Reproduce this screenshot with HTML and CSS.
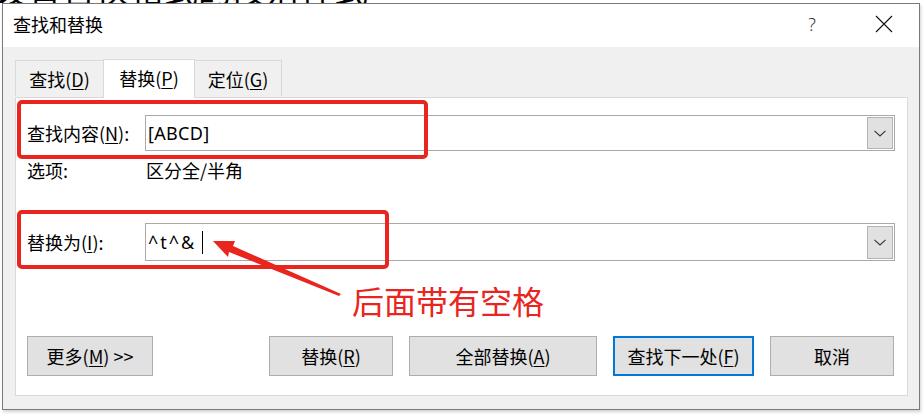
FILE: index.html
```html
<!DOCTYPE html>
<html lang="zh">
<head>
<meta charset="utf-8">
<title>查找和替换</title>
<link rel="stylesheet" href="styles.css">
</head>
<body>
<div class="top-strip"><span>设置替换格式的段落样式</span></div>
<div class="dialog">
  <div class="titlebar">
    <span class="title">查找和替换</span>
    <span class="help">?</span>
    <span class="close">
      <svg width="18" height="18" viewBox="0 0 18 18"><path d="M1 1 L17 17 M17 1 L1 17" stroke="#111" stroke-width="1.1" fill="none"/></svg>
    </span>
  </div>
  <div class="body">
    <div class="tabs">
      <div class="tab t1">查找(<u>D</u>)</div>
      <div class="tab t2 active">替换(<u>P</u>)</div>
      <div class="tab t3">定位(<u>G</u>)</div>
    </div>
    <div class="panel">
      <div class="row row-find">
        <span class="label">查找内容(<u>N</u>):</span>
        <div class="combo">
          <span class="value">[ABCD]</span>
          <span class="drop"><svg width="12" height="7" viewBox="0 0 12 7"><path d="M0.5 0.8 L6 6 L11.5 0.8" stroke="#333" stroke-width="1.1" fill="none"/></svg></span>
        </div>
      </div>
      <div class="row row-opt">
        <span class="label">选项:</span>
        <span class="opt">区分全/半角</span>
      </div>
      <div class="row row-repl">
        <span class="label">替换为(<u>I</u>):</span>
        <div class="combo combo2">
          <span class="value">^t^&amp;&nbsp;</span><span class="caret"></span>
          <span class="drop"><svg width="12" height="7" viewBox="0 0 12 7"><path d="M0.5 0.8 L6 6 L11.5 0.8" stroke="#333" stroke-width="1.1" fill="none"/></svg></span>
        </div>
      </div>
      <div class="buttons">
        <button class="btn b-more">更多(<u>M</u>) &gt;&gt;</button>
        <button class="btn b-repl">替换(<u>R</u>)</button>
        <button class="btn b-all">全部替换(<u>A</u>)</button>
        <button class="btn b-next">查找下一处(<u>F</u>)</button>
        <button class="btn b-cancel">取消</button>
      </div>
    </div>
  </div>
</div>

<div class="mark mark1"></div>
<div class="mark mark2"></div>
<svg class="arrow" width="924" height="415" viewBox="0 0 924 415">
  <polygon points="213,241 235,241 233,246 341,294 339,296 229,252 228,257" fill="#e8251f"/>
</svg>
<div class="note">后面带有空格</div>
</body>
</html>
```

FILE: styles.css
```css
html, body {
  margin: 0;
  padding: 0;
}
body {
  width: 924px;
  height: 415px;
  overflow: hidden;
  position: relative;
  background: #ffffff;
  font-family: "Noto Sans CJK SC", sans-serif;
  color: #000;
}
u { text-decoration: underline; text-underline-offset: 2px; text-decoration-thickness: 1px; }

.top-strip {
  height: 3px;
  overflow: hidden;
  white-space: nowrap;
  font-family: "Noto Sans CJK SC", sans-serif;
  font-size: 34px;
  line-height: 34px;
}
.top-strip span {
  display: block;
  margin-top: -28px;
  margin-left: -6px;
}

.dialog {
  margin-left: 2px;
  width: 916px;
  height: 405px;
  border: 1px solid #7a7a7a;
  box-shadow: 1px 2px 3px rgba(0,0,0,0.18);
  display: flex;
  flex-direction: column;
  background: #f0f0f0;
}

.titlebar {
  height: 43px;
  background: #fff;
  display: flex;
  align-items: center;
  padding-left: 10px;
  flex-shrink: 0;
}
.title {
  font-size: 18px;
  flex: 1;
  margin-top: -3px;
}
.help {
  font-family: "Noto Sans", sans-serif;
  font-size: 18px;
  font-weight: 300;
  color: #333;
  width: 20px;
  text-align: center;
  margin-right: 53px;
  margin-top: -3px;
}
.close {
  width: 18px;
  height: 18px;
  margin-right: 26px;
  margin-top: -4px;
}
.close svg { display: block; }

.body {
  flex: 1;
  padding: 12px 11px 13px 12px;
  display: flex;
  flex-direction: column;
}

.tabs {
  display: flex;
  align-items: flex-end;
  height: 38px;
  position: relative;
  z-index: 1;
}
.tab {
  height: 36px;
  box-sizing: border-box;
  border: 1px solid #d9d9d9;
  border-bottom: none;
  background: #f0f0f0;
  font-size: 18px;
  display: flex;
  align-items: center;
  justify-content: center;
  margin-bottom: 1px;
}
.t1 { width: 88px; border-right: none; }
.t2 { width: 92px; }
.t3 { width: 87px; border-left: none; }
.tab.active {
  height: 39px;
  background: #fff;
  margin-bottom: -1px;
  padding-bottom: 2px;
}

.panel {
  flex: 1;
  background: #fff;
  border: 1px solid #d9d9d9;
  display: flex;
  flex-direction: column;
}

.row {
  display: flex;
  align-items: center;
  padding: 0 12px 0 11px;
}
.label {
  width: 118px;
  flex-shrink: 0;
  font-size: 18px;
}
.row-find { margin-top: 17px; }
.row-opt { margin-top: 8px; height: 22px; }
.row-repl { margin-top: 42px; }

.opt {
  font-size: 18px;
  margin-left: 1px;
}

.combo {
  width: 750px;
  height: 36px;
  box-sizing: border-box;
  border: 1px solid #a9a9a9;
  display: flex;
  align-items: center;
  padding: 0 1px 0 2px;
  font-size: 18px;
}
.combo2 { height: 38px; }
.value {
  font-family: "Noto Sans", sans-serif;
  white-space: pre;
  letter-spacing: 0.3px;
}
.combo2 .value { letter-spacing: 2px; }
.caret {
  width: 1px;
  height: 23px;
  background: #000;
  margin-left: -1px;
}
.drop {
  margin-left: auto;
  width: 26px;
  height: 32px;
  box-sizing: border-box;
  background: #e1e1e1;
  border: 1px solid #b4b4b4;
  display: flex;
  align-items: center;
  justify-content: center;
}
.combo2 .drop { height: 33px; }
.drop svg { display: block; }

.buttons {
  display: flex;
  gap: 16px;
  margin-top: 75px;
  padding: 0 13px 0 11px;
}
.btn {
  height: 40px;
  box-sizing: border-box;
  background: #e1e1e1;
  border: 1px solid #adadad;
  font-family: "Noto Sans CJK SC", sans-serif;
  font-size: 18px;
  color: #000;
  padding: 0;
  margin: 0;
}
.b-more { width: 126px; margin-right: 100px; }
.b-repl { width: 124px; }
.b-all { width: 188px; }
.b-next { width: 141px; border: 2px solid #0078d7; }
.b-cancel { width: 124px; }

.mark {
  position: absolute;
  border: 4px solid #e8251f;
  border-radius: 5px;
  box-sizing: border-box;
}
.mark1 { left: 17px; top: 100px; width: 411px; height: 59px; }
.mark2 { left: 17px; top: 210px; width: 372px; height: 59px; }

.arrow {
  position: absolute;
  left: 0;
  top: 0;
}
.note {
  position: absolute;
  left: 352px;
  top: 280px;
  font-size: 32px;
  line-height: 40px;
  color: #e8251f;
  white-space: nowrap;
}
```
